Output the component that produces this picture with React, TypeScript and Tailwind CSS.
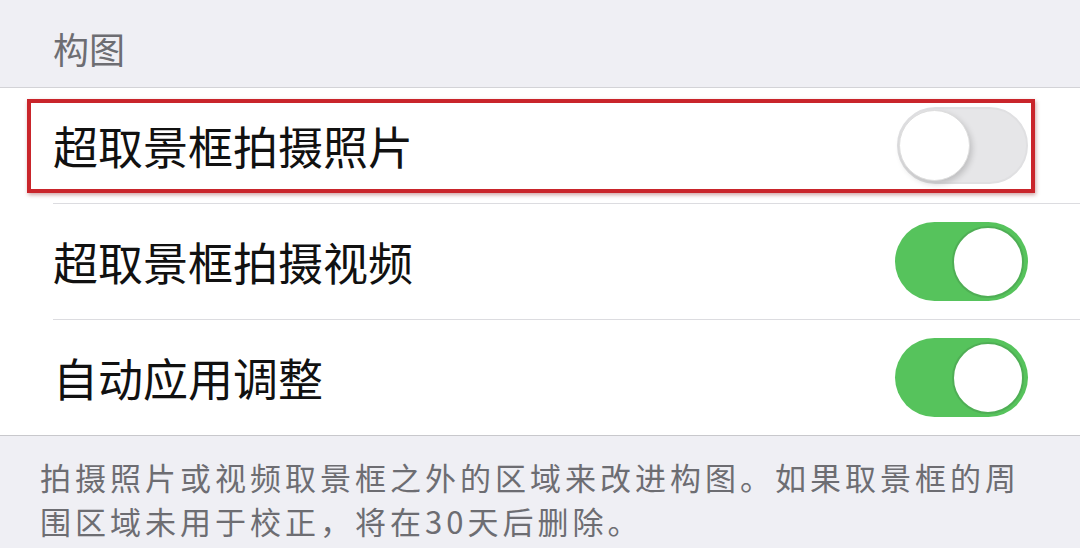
import React from 'react';

type Row = { label: string; on: boolean; marked?: boolean };

const rows: Row[] = [
  { label: '超取景框拍摄照片', on: false, marked: true },
  { label: '超取景框拍摄视频', on: true },
  { label: '自动应用调整', on: true },
];

function Toggle({ on }: { on: boolean }) {
  if (on) {
    return (
      <div className="w-[133px] h-[79px] rounded-full bg-[#56c35c] flex items-center justify-end pr-[4px]">
        <div className="w-[72px] h-[72px] rounded-full bg-white border-2 border-[#4fae55]" />
      </div>
    );
  }
  return (
    <div className="w-[131px] h-[77px] rounded-full bg-[#e6e6e8] border-2 border-[#e0e0e2] flex items-center">
      <div className="w-[71px] h-[71px] rounded-full bg-white shadow-[2px_3px_6px_rgba(0,0,0,0.18)] border border-[#dddddd]" />
    </div>
  );
}

export default function App() {
  return (
    <div
      className="w-[1080px] h-[548px] bg-[#efeff4] overflow-hidden"
      style={{ fontFamily: '"Noto Sans CJK SC", "Noto Sans", sans-serif' }}
    >
      {/* section header */}
      <div className="h-[88px] border-b border-[#d3d3d7] pl-[53px] pt-[30px]">
        <span className="text-[36px] leading-none text-[#6d6d72]">构图</span>
      </div>

      {/* toggle rows */}
      <div className="bg-white border-b border-[#c8c8cc]">
        {rows.map((row, i) => (
          <div key={row.label} className="relative pl-[53px]">
            <div
              className={
                i < rows.length - 1
                  ? 'h-[116px] flex items-center justify-between pr-[52px] border-b border-[#dcdce0]'
                  : 'h-[115px] flex items-center justify-between pr-[52px]'
              }
            >
              <span className="text-[45px] leading-none text-[#111111]">{row.label}</span>
              <Toggle on={row.on} />
            </div>
            {row.marked && (
              <div className="absolute left-[27px] top-[11px] w-[1008px] h-[94px] border-[4px] border-[#c9252b] shadow-[1px_2px_4px_rgba(120,0,0,0.35)]" />
            )}
          </div>
        ))}
      </div>

      {/* footer note */}
      <div className="pl-[40px] pt-[19px]">
        <p className="w-[1000px] text-[31px] leading-[44px] tracking-[4px] text-[#6d6d72]">
          拍摄照片或视频取景框之外的区域来改进构图。如果取景框的周围区域未用于校正，将在30天后删除。
        </p>
      </div>
    </div>
  );
}
